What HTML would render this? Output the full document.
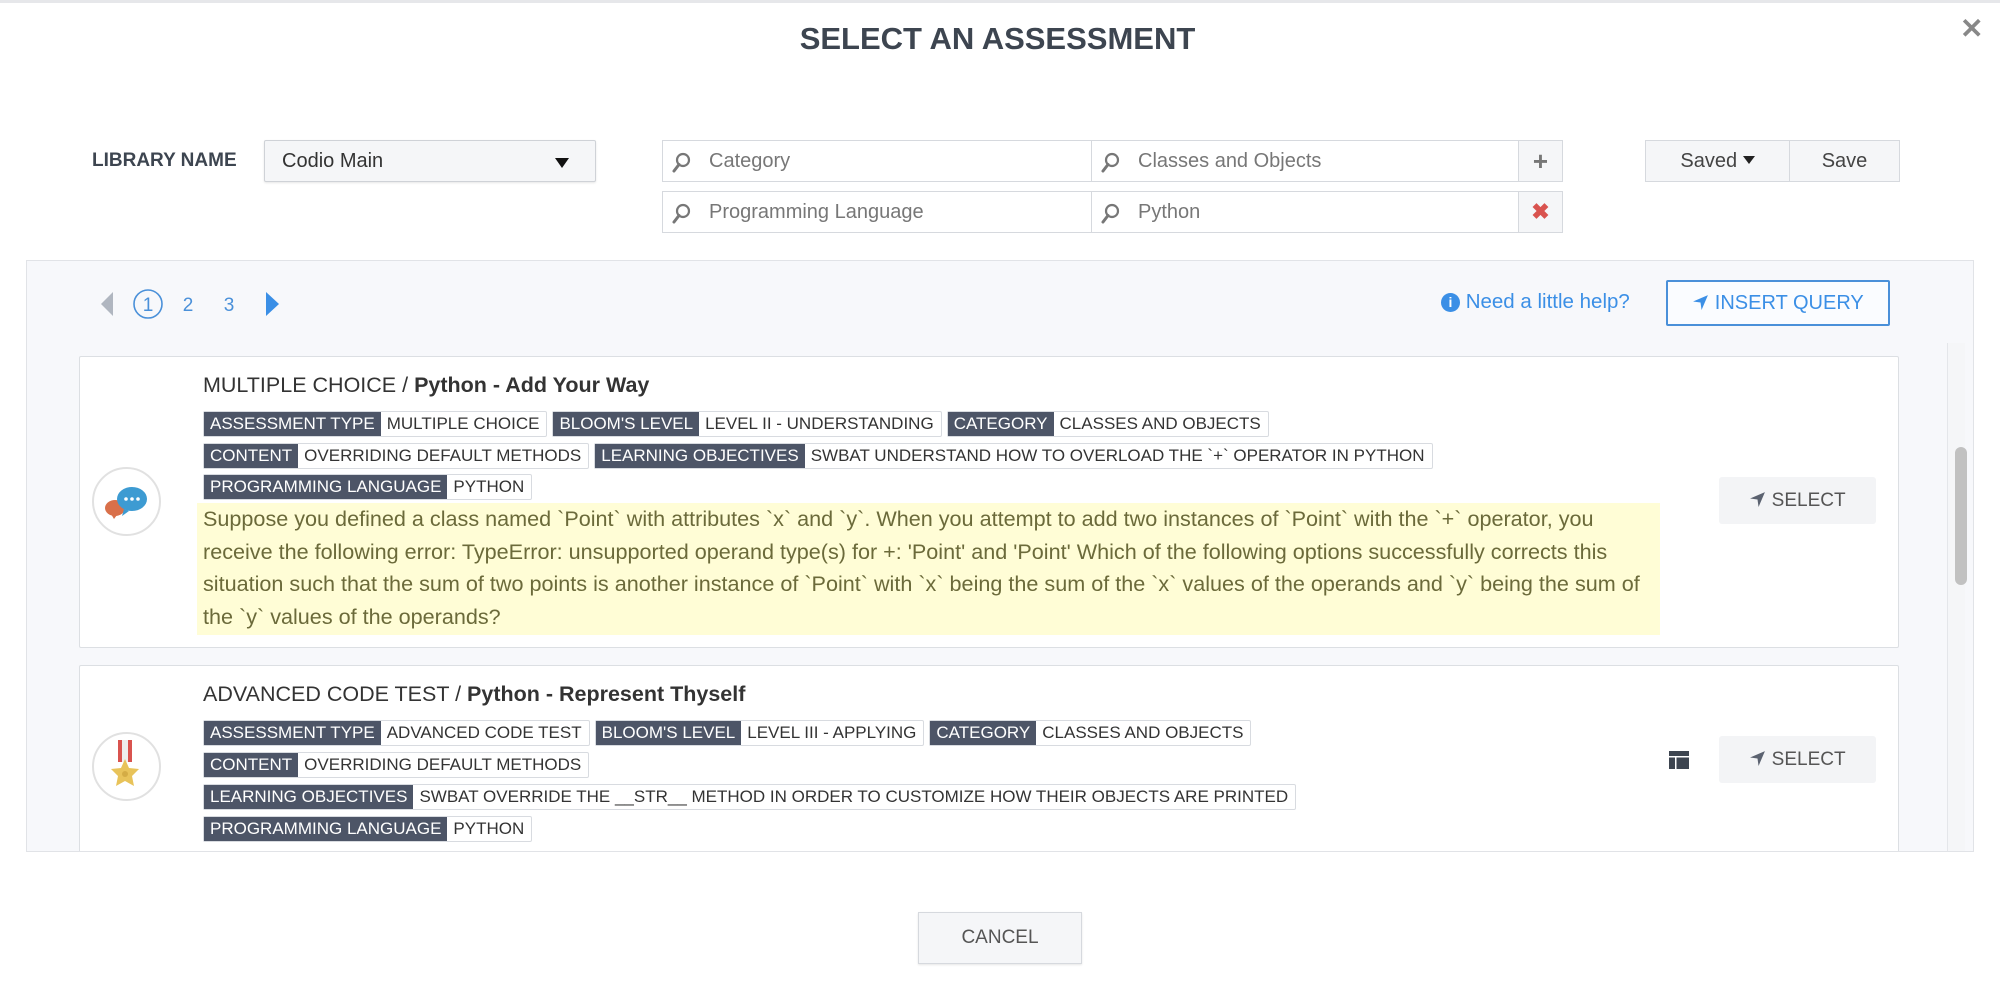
<!DOCTYPE html>
<html><head><meta charset="utf-8"><style>
*{box-sizing:border-box;margin:0;padding:0}
body{width:2000px;height:993px;background:#fff;font-family:"Liberation Sans",sans-serif;position:relative;overflow:hidden;color:#333}
.a{position:absolute}
.topline{left:0;top:0;width:2000px;height:3px;background:#e6e7ea}
h1{position:absolute;left:0;width:1995px;top:21px;text-align:center;font-size:31px;font-weight:bold;color:#3d4550}
.close{left:1960px;top:12px;font-size:28px;color:#888;font-weight:bold}
.lib{left:92px;top:150px;font-size:19px;font-weight:bold;color:#3d4550}
.sel{left:264px;top:140px;width:332px;height:42px;background:#f5f6f8;border:1px solid #cfd2d7;border-radius:2px;box-shadow:0 1px 2px rgba(0,0,0,.1);font-size:20px;padding:9px 17px;color:#333}
.sel .tri{position:absolute;right:26px;top:17px;width:0;height:0;border-left:7px solid transparent;border-right:7px solid transparent;border-top:10px solid #111}
.f{height:42px;border:1px solid #d6d9de;background:#fff;font-size:20px;color:#777;padding:9px 0 0 46px}
.f svg{position:absolute;left:9px;top:11px}
.fb{width:45px;height:42px;border:1px solid #d6d9de;background:#f5f6f8;text-align:center;font-size:26px;font-weight:bold;line-height:40px}
.btn{height:42px;border:1px solid #d6d9de;background:#f5f6f8;font-size:20px;color:#444;text-align:center;line-height:40px}
.panel{left:26px;top:260px;width:1948px;height:592px;background:#f7f8fb;border:1px solid #e1e3e7;overflow:hidden}
.card{background:#fff;border:1px solid #dcdfe3;border-radius:2px;left:52px;width:1820px}
.ic{width:69px;height:69px;border-radius:50%;border:2px solid #e1e1e1;background:#fff}
.title{font-size:21.5px;color:#333;white-space:nowrap}
.tag{display:inline-flex;height:26px;border:1px solid #d8dbe0;border-radius:2px;font-size:17px;line-height:24px;margin-right:5px;white-space:nowrap;background:#fff}
.tag b{font-weight:normal;background:#4d5567;color:#fff;padding:0 6px}
.tag span{padding:0 7px 0 6px;color:#333}
.row{position:absolute;left:123px;white-space:nowrap}
.q{left:117px;width:1463px;height:132px;background:#fffdd6;color:#6b6a3a;font-size:21.6px;line-height:32.6px;padding:0 0 0 6px;white-space:nowrap;overflow:hidden}
.sbtn{width:157px;height:47px;background:#f3f4f6;border-radius:3px;color:#555;font-size:19px;line-height:47px;text-align:center}
</style></head><body>
<div class="a topline"></div>
<h1>SELECT AN ASSESSMENT</h1>
<div class="a close">✕</div>
<div class="a lib">LIBRARY NAME</div>
<div class="a sel">Codio Main<div class="tri"></div></div>

<div class="a f" style="left:662px;top:140px;width:430px"><svg width="20" height="22" viewBox="0 0 20 22"><circle cx="11" cy="8" r="6" fill="none" stroke="#777" stroke-width="2.2"/><line x1="7" y1="12.5" x2="2" y2="19" stroke="#777" stroke-width="3" stroke-linecap="round"/></svg>Category</div>
<div class="a f" style="left:1091px;top:140px;width:428px"><svg width="20" height="22" viewBox="0 0 20 22"><circle cx="11" cy="8" r="6" fill="none" stroke="#777" stroke-width="2.2"/><line x1="7" y1="12.5" x2="2" y2="19" stroke="#777" stroke-width="3" stroke-linecap="round"/></svg>Classes and Objects</div>
<div class="a fb" style="left:1518px;top:140px;color:#777">+</div>
<div class="a f" style="left:662px;top:191px;width:430px"><svg width="20" height="22" viewBox="0 0 20 22"><circle cx="11" cy="8" r="6" fill="none" stroke="#777" stroke-width="2.2"/><line x1="7" y1="12.5" x2="2" y2="19" stroke="#777" stroke-width="3" stroke-linecap="round"/></svg>Programming Language</div>
<div class="a f" style="left:1091px;top:191px;width:428px"><svg width="20" height="22" viewBox="0 0 20 22"><circle cx="11" cy="8" r="6" fill="none" stroke="#777" stroke-width="2.2"/><line x1="7" y1="12.5" x2="2" y2="19" stroke="#777" stroke-width="3" stroke-linecap="round"/></svg>Python</div>
<div class="a fb" style="left:1518px;top:191px;color:#d9534f;font-size:22px">✖</div>

<div class="a btn" style="left:1645px;top:140px;width:145px">Saved <span style="display:inline-block;width:0;height:0;border-left:6px solid transparent;border-right:6px solid transparent;border-top:8px solid #222;vertical-align:3px"></span></div>
<div class="a btn" style="left:1789px;top:140px;width:111px">Save</div>

<div class="a panel">
  <svg class="a" style="left:70px;top:28px" width="160" height="30" viewBox="0 0 160 30">
    <path d="M16 3 L4 15 L16 27 Z" fill="#b0b6c0"/>
    <circle cx="51" cy="15" r="14" fill="none" stroke="#4a90d9" stroke-width="1.6"/>
    <text x="51" y="22" text-anchor="middle" font-family="Liberation Sans" font-size="19" fill="#4a90d9">1</text>
    <text x="91" y="22" text-anchor="middle" font-family="Liberation Sans" font-size="19" fill="#4a90d9">2</text>
    <text x="132" y="22" text-anchor="middle" font-family="Liberation Sans" font-size="19" fill="#4a90d9">3</text>
  </svg>
  <svg class="a" style="left:236px;top:28px" width="20" height="30" viewBox="0 0 20 30"><path d="M3 3 L16 15 L3 27 Z" fill="#3b8fe6"/></svg>
  <div class="a" style="left:1414px;top:29px;font-size:20.5px;color:#3b8fe6;white-space:nowrap"><span style="display:inline-block;width:19px;height:19px;border-radius:50%;background:#3b8fe6;color:#fff;font-size:14px;font-weight:bold;text-align:center;line-height:19px;vertical-align:1px">i</span> Need a little help?</div>
  <div class="a" style="left:1639px;top:19px;width:224px;height:46px;border:2px solid #4a90d9;border-radius:2px;color:#3b8fe6;font-size:20px;text-align:center;line-height:42px;background:#fafcff"><svg width="17" height="17" viewBox="0 0 16 16" style="vertical-align:-2px"><path d="M15 1 L1 7 L8 8 L9 15 Z" fill="#3b8fe6"/></svg> INSERT QUERY</div>
  <div class="a" style="left:1920px;top:82px;width:18px;height:520px;border-left:1px solid #e4e6ea;background:#f5f6f8"></div>
  <div class="a" style="left:1928px;top:186px;width:12px;height:138px;border-radius:6px;background:#c1c1c1"></div>

  <div class="a card" style="top:95px;height:292px">
    <div class="a ic" style="left:12px;top:110px"><svg width="65" height="65" viewBox="0 0 65 65"><ellipse cx="21" cy="39" rx="10" ry="8" fill="#d9704a"/><path d="M17 45 l3 5 l3 -4z" fill="#d9704a"/><ellipse cx="38" cy="30" rx="15" ry="12" fill="#3d9bd2"/><path d="M30 40 l-2 7 l7 -5z" fill="#3d9bd2"/><circle cx="32" cy="30" r="1.8" fill="#fff"/><circle cx="38" cy="30" r="1.8" fill="#fff"/><circle cx="44" cy="30" r="1.8" fill="#fff"/></svg></div>
    <div class="a title" style="left:123px;top:16px">MULTIPLE CHOICE / <b>Python - Add Your Way</b></div>
    <div class="row" style="top:54px"><div class="tag"><b>ASSESSMENT TYPE</b><span>MULTIPLE CHOICE</span></div><div class="tag"><b>BLOOM'S LEVEL</b><span>LEVEL II - UNDERSTANDING</span></div><div class="tag"><b>CATEGORY</b><span>CLASSES AND OBJECTS</span></div></div>
    <div class="row" style="top:86px"><div class="tag"><b>CONTENT</b><span>OVERRIDING DEFAULT METHODS</span></div><div class="tag"><b>LEARNING OBJECTIVES</b><span>SWBAT UNDERSTAND HOW TO OVERLOAD THE `+` OPERATOR IN PYTHON</span></div></div>
    <div class="row" style="top:117px"><div class="tag"><b>PROGRAMMING LANGUAGE</b><span>PYTHON</span></div></div>
    <div class="a q" style="top:146px">Suppose you defined a class named `Point` with attributes `x` and `y`. When you attempt to add two instances of `Point` with the `+` operator, you<br>receive the following error: TypeError: unsupported operand type(s) for +: 'Point' and 'Point' Which of the following options successfully corrects this<br>situation such that the sum of two points is another instance of `Point` with `x` being the sum of the `x` values of the operands and `y` being the sum of<br>the `y` values of the operands?</div>
    <div class="a sbtn" style="left:1639px;top:120px"><svg width="17" height="17" viewBox="0 0 16 16" style="vertical-align:-2px"><path d="M15 1 L1 7 L8 8 L9 15 Z" fill="#5b6270"/></svg> SELECT</div>
  </div>

  <div class="a card" style="top:404px;height:240px">
    <div class="a ic" style="left:12px;top:66px"><svg width="65" height="65" viewBox="0 0 65 65"><rect x="24" y="6" width="14" height="22" fill="#d9534f"/><rect x="28" y="6" width="6" height="22" fill="#eee"/><path d="M31 25 L35 34 L45 35 L38 42 L40 52 L31 47 L22 52 L24 42 L17 35 L27 34 Z" fill="#e8c35a"/><circle cx="31" cy="40" r="3" fill="#d4ac45"/></svg></div>
    <div class="a title" style="left:123px;top:16px">ADVANCED CODE TEST / <b>Python - Represent Thyself</b></div>
    <div class="row" style="top:54px"><div class="tag"><b>ASSESSMENT TYPE</b><span>ADVANCED CODE TEST</span></div><div class="tag"><b>BLOOM'S LEVEL</b><span>LEVEL III - APPLYING</span></div><div class="tag"><b>CATEGORY</b><span>CLASSES AND OBJECTS</span></div></div>
    <div class="row" style="top:86px"><div class="tag"><b>CONTENT</b><span>OVERRIDING DEFAULT METHODS</span></div></div>
    <div class="row" style="top:118px"><div class="tag"><b>LEARNING OBJECTIVES</b><span>SWBAT OVERRIDE THE __STR__ METHOD IN ORDER TO CUSTOMIZE HOW THEIR OBJECTS ARE PRINTED</span></div></div>
    <div class="row" style="top:150px"><div class="tag"><b>PROGRAMMING LANGUAGE</b><span>PYTHON</span></div></div>
    <svg class="a" style="left:1589px;top:85px" width="20" height="18" viewBox="0 0 20 18"><rect x="0" y="0" width="20" height="5" fill="#3d4550"/><rect x="0" y="6.5" width="6" height="11.5" fill="#3d4550"/><rect x="7.5" y="6.5" width="12.5" height="11.5" fill="#3d4550"/></svg>
    <div class="a sbtn" style="left:1639px;top:70px"><svg width="17" height="17" viewBox="0 0 16 16" style="vertical-align:-2px"><path d="M15 1 L1 7 L8 8 L9 15 Z" fill="#5b6270"/></svg> SELECT</div>
  </div>
</div>

<div class="a btn" style="left:918px;top:912px;width:164px;height:52px;line-height:50px;font-size:19px;color:#555;box-shadow:0 1px 2px rgba(0,0,0,.1)">CANCEL</div>
</body></html>
